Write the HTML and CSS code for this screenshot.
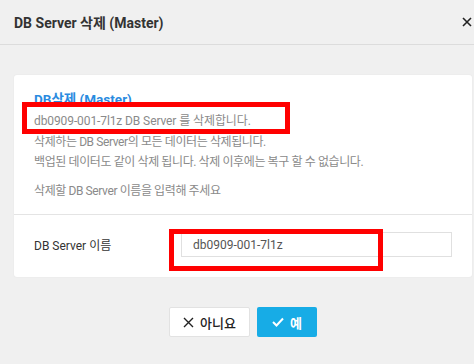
FILE: index.html
```html
<!DOCTYPE html>
<html lang="ko">
<head>
  <meta charset="UTF-8" />
  <title>DB Server 삭제 (Master)</title>
  <link rel="stylesheet" href="styles.css">
</head>
<body>
  <div class="dialog">
    <header class="dialog-head">
      <h1>DB Server 삭제 (Master)</h1>
      <span class="close">
        <svg width="10" height="10" viewBox="0 0 10 10"><path d="M1 1L9 9M9 1L1 9" stroke="#222" stroke-width="1.6"/></svg>
      </span>
    </header>
    <div class="dialog-body">
      <div class="card">
        <div class="card-info">
          <h2>DB삭제 (Master)</h2>
          <p class="lead">db0909-001-7l1z DB Server 를 삭제합니다.</p>
          <p>삭제하는 DB Server의 모든 데이터는 삭제됩니다.</p>
          <p>백업된 데이터도 같이 삭제 됩니다. 삭제 이후에는 복구 할 수 없습니다.</p>
          <p class="ask">삭제할 DB Server 이름을 입력해 주세요</p>
        </div>
        <div class="card-form">
          <label for="name">DB Server 이름</label>
          <input id="name" type="text" value="db0909-001-7l1z">
        </div>
      </div>
      <div class="actions">
        <button class="btn btn-no">
          <svg width="11" height="11" viewBox="0 0 11 11"><path d="M1 1L10 10M10 1L1 10" stroke="#222" stroke-width="1.4"/></svg>
          아니요
        </button>
        <button class="btn btn-yes">
          <svg width="12" height="10" viewBox="0 0 12 10"><path d="M1 5L4.5 8.5L11 1.5" fill="none" stroke="#fff" stroke-width="2"/></svg>
          예
        </button>
      </div>
    </div>
    <div class="mark mark-1"></div>
    <div class="mark mark-2"></div>
  </div>
</body>
</html>
```

FILE: styles.css
```css
html, body {
  margin: 0;
  overflow: hidden;
}
body {
  background: #f0f0f0;
  font-family: Roboto, "Noto Sans CJK KR", sans-serif;
  width: 474px;
  height: 364px;
}
.dialog {
  position: relative;
  width: 486px;
}
.dialog-head {
  display: flex;
  align-items: center;
  justify-content: space-between;
  height: 44px;
  padding: 0 14px;
  border-bottom: 1px solid #dcdcdc;
}
.dialog-head h1 {
  margin: 0;
  font-size: 14px;
  font-weight: bold;
  color: #333;
}
.close {
  display: flex;
}
.dialog-body {
  padding: 30px 14px 0;
}
.card {
  background: #fff;
  border-radius: 3px;
  box-shadow: 0 0 2px rgba(0, 0, 0, 0.06);
}
.card-info {
  padding: 14px 20px 13px;
  border-bottom: 1px solid #e4e4e4;
}
.card-info h2 {
  margin: 0 0 2px;
  font-size: 13.5px;
  font-weight: bold;
  line-height: 20px;
  color: #2a8be0;
  text-decoration: underline;
}
.card-info p {
  margin: 0;
  font-size: 12px;
  line-height: 20.5px;
  color: #8a8a8a;
  letter-spacing: -0.4px;
}
.card-info p.lead {
  letter-spacing: -0.1px;
}
.card-info p.ask {
  margin-top: 8px;
}
.card-form {
  display: grid;
  grid-template-columns: 147px 1fr;
  align-items: center;
  padding: 17px 20px 20px;
}
.card-form label {
  font-size: 12px;
  color: #333;
}
.card-form input {
  height: 25px;
  box-sizing: border-box;
  border: 1px solid #e0e0e0;
  padding: 0 11px;
  font-family: Roboto, "Noto Sans CJK KR", sans-serif;
  font-size: 12px;
  color: #555;
  outline: none;
}
.actions {
  display: flex;
  justify-content: center;
  gap: 7px;
  margin-top: 30px;
}
.btn {
  display: flex;
  align-items: center;
  justify-content: center;
  gap: 6px;
  height: 30px;
  box-sizing: border-box;
  border-radius: 2px;
  font-family: Roboto, "Noto Sans CJK KR", sans-serif;
  font-size: 13px;
  font-weight: 500;
  cursor: pointer;
}
.btn-no {
  width: 81px;
  background: #fff;
  border: 1px solid #e2e2e2;
  color: #222;
}
.btn-yes {
  width: 60px;
  background: #17ace6;
  border: none;
  color: #fff;
  font-weight: bold;
}
.mark {
  position: absolute;
  border: 5px solid #ff0000;
  box-sizing: border-box;
}
.mark-1 {
  left: 22px;
  top: 102px;
  width: 268px;
  height: 32px;
}
.mark-2 {
  left: 169px;
  top: 229px;
  width: 214px;
  height: 42px;
}
```
